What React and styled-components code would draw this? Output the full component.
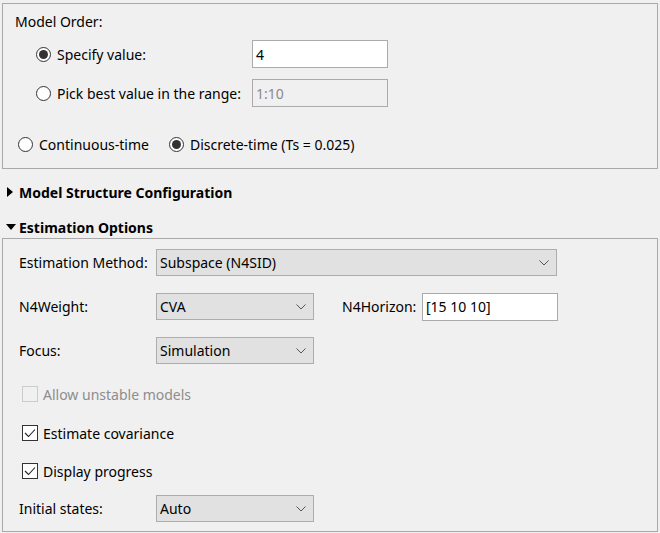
import styled, { createGlobalStyle } from 'styled-components';

const GlobalStyle = createGlobalStyle`
  html, body {
    margin: 0;
    padding: 0;
    background: #f0f0f0;
  }
  body {
    font-family: "Noto Sans", "Open Sans", sans-serif;
    font-size: 14px;
    color: #000;
  }
`;

const Page = styled.div`
  width: 660px;
  height: 533px;
  box-sizing: border-box;
  padding: 3px 2px 0 2px;
  background: #f0f0f0;
`;

const Panel = styled.div`
  border: 1px solid #a9a9a9;
  box-sizing: border-box;
  height: ${(p) => p.$height}px;
  padding: ${(p) => p.$padding};
  margin-top: ${(p) => p.$mt || 0}px;
`;

const Title = styled.div`
  height: 20px;
  line-height: 20px;
  padding-left: 12px;
`;

const Row = styled.div`
  display: flex;
  align-items: center;
  height: ${(p) => p.$height || 20}px;
  margin-top: ${(p) => p.$mt || 0}px;
  padding-left: ${(p) => p.$pl || 0}px;
`;

const RadioLabel = styled.label`
  display: flex;
  align-items: center;
  gap: 6px;
  width: ${(p) => (p.$width ? `${p.$width}px` : 'auto')};
  margin-right: ${(p) => p.$mr || 0}px;
  white-space: nowrap;
`;

const RadioDot = styled.span`
  width: 15px;
  height: 15px;
  box-sizing: border-box;
  border: 1px solid #333;
  border-radius: 50%;
  background: #fff;
  display: flex;
  align-items: center;
  justify-content: center;
  flex: none;

  &::after {
    content: '';
    width: 9px;
    height: 9px;
    border-radius: 50%;
    background: #333;
    display: ${(p) => (p.$checked ? 'block' : 'none')};
  }
`;

const TextBox = styled.div`
  box-sizing: border-box;
  width: ${(p) => p.$width}px;
  height: 28px;
  border: 1px solid #ababab;
  background: ${(p) => (p.$disabled ? '#f0f0f0' : '#fff')};
  color: ${(p) => (p.$disabled ? '#8a8a8a' : '#000')};
  display: flex;
  align-items: center;
  padding-left: 3px;
  flex: none;
`;

const SectionHeader = styled.div`
  display: flex;
  align-items: center;
  height: 20px;
  font-weight: bold;
  padding-left: ${(p) => p.$pl}px;
  margin-top: ${(p) => p.$mt}px;
  gap: ${(p) => p.$gap}px;
`;

const TriangleRight = styled.span`
  width: 0;
  height: 0;
  border-top: 5.5px solid transparent;
  border-bottom: 5.5px solid transparent;
  border-left: 6px solid #000;
`;

const TriangleDown = styled.span`
  width: 0;
  height: 0;
  border-left: 5.5px solid transparent;
  border-right: 5.5px solid transparent;
  border-top: 6px solid #000;
`;

const FieldLabel = styled.span`
  width: ${(p) => p.$width}px;
  margin-left: ${(p) => p.$ml || 0}px;
  flex: none;
  white-space: nowrap;
`;

const Select = styled.div`
  box-sizing: border-box;
  width: ${(p) => p.$width}px;
  height: 27px;
  border: 1px solid #adadad;
  background: #e1e1e1;
  display: flex;
  align-items: center;
  justify-content: space-between;
  padding: 0 7px 0 3px;
  flex: none;
`;

const Chevron = () => (
  <svg width="10" height="6" viewBox="0 0 10 6">
    <path d="M0.5 0.5 L5 5 L9.5 0.5" fill="none" stroke="#555" strokeWidth="1" />
  </svg>
);

const CheckLabel = styled.label`
  display: flex;
  align-items: center;
  gap: 5px;
  color: ${(p) => (p.$disabled ? '#8d8d8d' : '#000')};
`;

const CheckBox = styled.span`
  width: 16px;
  height: 16px;
  box-sizing: border-box;
  border: 1px solid ${(p) => (p.$disabled ? '#cccccc' : '#333')};
  background: ${(p) => (p.$disabled ? '#f0f0f0' : '#fff')};
  display: flex;
  align-items: center;
  justify-content: center;
  flex: none;
`;

const Radio = ({ checked, children, width, mr }) => (
  <RadioLabel $width={width} $mr={mr}>
    <RadioDot $checked={checked} />
    {children}
  </RadioLabel>
);

const Check = ({ checked, disabled, children }) => (
  <CheckLabel $disabled={disabled}>
    <CheckBox $disabled={disabled}>
      {checked && (
        <svg width="12" height="10" viewBox="0 0 12 10">
          <path d="M1 5 L4.5 8.5 L11 1.5" fill="none" stroke="#222" strokeWidth="1.1" />
        </svg>
      )}
    </CheckBox>
    {children}
  </CheckLabel>
);

export default function App() {
  return (
    <Page>
      <GlobalStyle />
      {/* Model Order */}
      <Panel $height={166} $padding="8px 0 0 0">
        <Title>Model Order:</Title>
        <Row $height={28} $mt={8} $pl={33}>
          <Radio checked width={216}>Specify value:</Radio>
          <TextBox $width={136}>4</TextBox>
        </Row>
        <Row $height={28} $mt={11} $pl={33}>
          <Radio width={216}>Pick best value in the range:</Radio>
          <TextBox $width={136} $disabled>1:10</TextBox>
        </Row>
        <Row $mt={27} $pl={15}>
          <Radio mr={20}>Continuous-time</Radio>
          <Radio checked>Discrete-time (Ts = 0.025)</Radio>
        </Row>
      </Panel>

      <SectionHeader $pl={5} $mt={13} $gap={6}>
        <TriangleRight />
        Model Structure Configuration
      </SectionHeader>
      <SectionHeader $pl={4} $mt={15} $gap={3}>
        <TriangleDown />
        Estimation Options
      </SectionHeader>

      {/* Estimation Options */}
      <Panel $height={294} $padding="10px 0 0 16px" $mt={1}>
        <Row $height={27}>
          <FieldLabel $width={137}>Estimation Method:</FieldLabel>
          <Select $width={401}>
            Subspace (N4SID)
            <Chevron />
          </Select>
        </Row>
        <Row $height={27} $mt={17}>
          <FieldLabel $width={137}>N4Weight:</FieldLabel>
          <Select $width={158}>
            CVA
            <Chevron />
          </Select>
          <FieldLabel $width={80} $ml={28}>N4Horizon:</FieldLabel>
          <TextBox $width={136}>[15 10 10]</TextBox>
        </Row>
        <Row $height={27} $mt={17}>
          <FieldLabel $width={137}>Focus:</FieldLabel>
          <Select $width={158}>
            Simulation
            <Chevron />
          </Select>
        </Row>
        <Row $mt={20} $pl={3}>
          <Check disabled>Allow unstable models</Check>
        </Row>
        <Row $mt={19} $pl={3}>
          <Check checked>Estimate covariance</Check>
        </Row>
        <Row $mt={18} $pl={3}>
          <Check checked>Display progress</Check>
        </Row>
        <Row $height={27} $mt={14}>
          <FieldLabel $width={137}>Initial states:</FieldLabel>
          <Select $width={158}>
            Auto
            <Chevron />
          </Select>
        </Row>
      </Panel>
    </Page>
  );
}
